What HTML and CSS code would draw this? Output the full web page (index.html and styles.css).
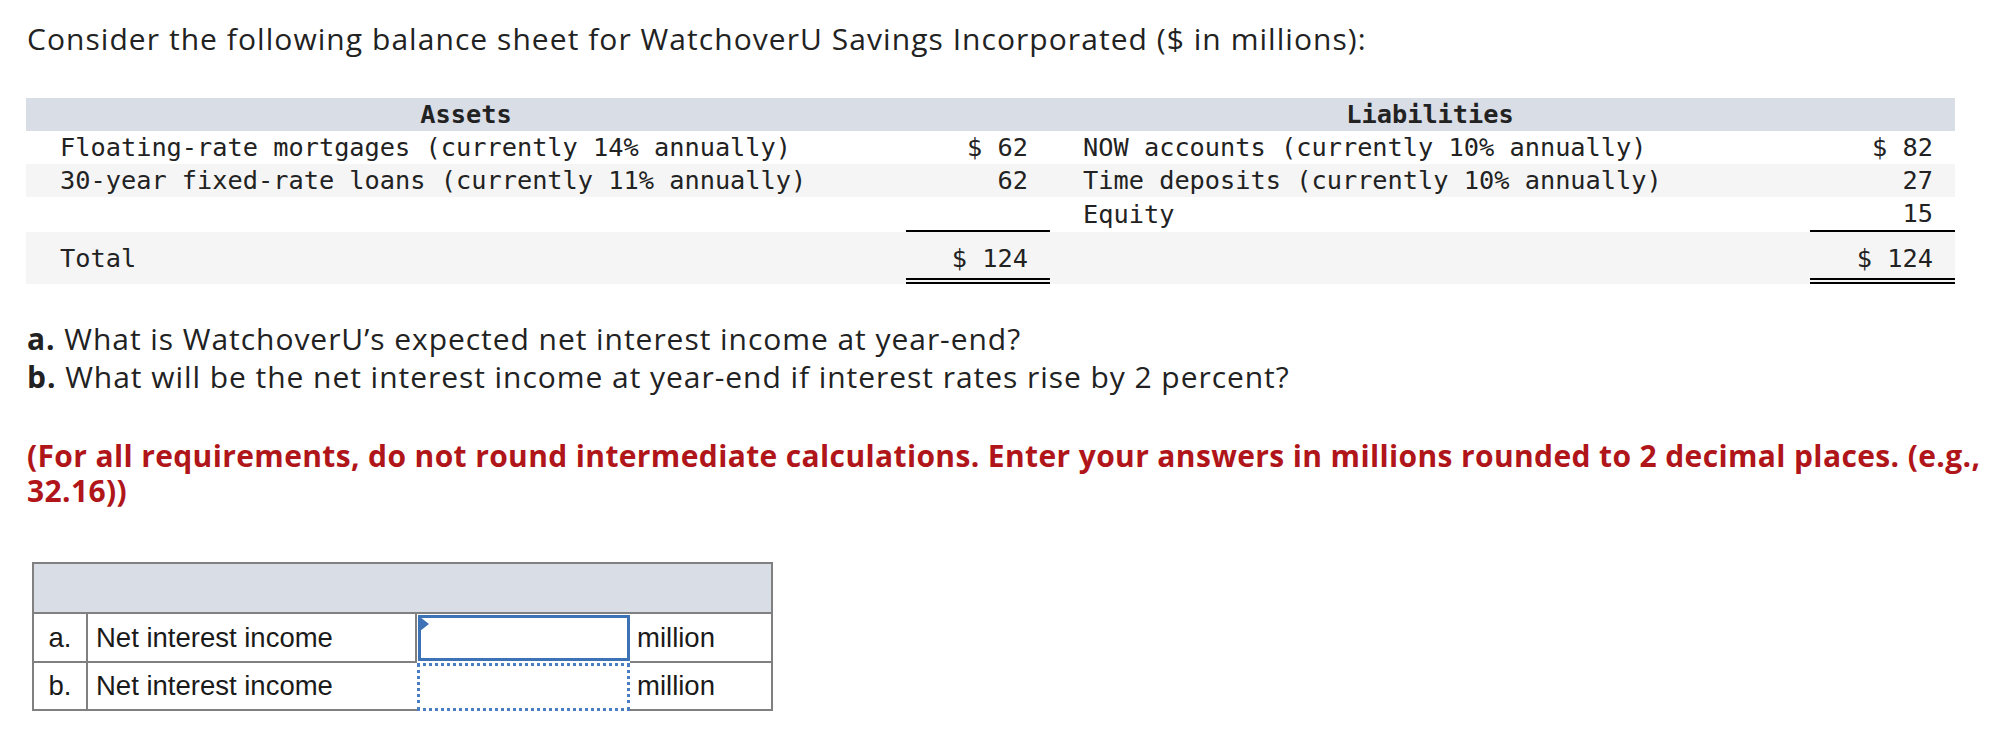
FILE: index.html
```html
<!DOCTYPE html>
<html lang="en">
<head>
<meta charset="utf-8">
<title>WatchoverU Savings balance sheet</title>
<link rel="stylesheet" href="styles.css">
</head>
<body>
<main class="page">
  <p class="title">Consider the following balance sheet for WatchoverU Savings Incorporated ($ in millions):</p>

  <table class="bs">
    <colgroup>
      <col class="col-lab-a">
      <col class="col-amt-a">
      <col class="col-lab-l">
      <col class="col-amt-l">
    </colgroup>
    <thead>
      <tr class="bs-head">
        <th>Assets</th>
        <th></th>
        <th>Liabilities</th>
        <th></th>
      </tr>
    </thead>
    <tbody>
      <tr>
        <td class="lab">Floating-rate mortgages (currently 14% annually)</td>
        <td class="amt">$ 62</td>
        <td class="lab lab-l">NOW accounts (currently 10% annually)</td>
        <td class="amt">$ 82</td>
      </tr>
      <tr class="alt">
        <td class="lab">30-year fixed-rate loans (currently 11% annually)</td>
        <td class="amt">62</td>
        <td class="lab lab-l">Time deposits (currently 10% annually)</td>
        <td class="amt">27</td>
      </tr>
      <tr class="sub">
        <td class="lab"></td>
        <td class="amt"></td>
        <td class="lab lab-l">Equity</td>
        <td class="amt">15</td>
      </tr>
      <tr class="alt total">
        <td class="lab">Total</td>
        <td class="amt">$ 124</td>
        <td class="lab lab-l"></td>
        <td class="amt">$ 124</td>
      </tr>
    </tbody>
  </table>

  <div class="questions">
    <p class="q"><b>a.</b> What is WatchoverU’s expected net interest income at year-end?</p>
    <p class="q"><b>b.</b> What will be the net interest income at year-end if interest rates rise by 2 percent?</p>
  </div>

  <p class="note">(For all requirements, do not round intermediate calculations. Enter your answers in millions rounded to 2 decimal places. (e.g.,<br>32.16))</p>

  <div class="answers">
    <div class="ans-head"></div>

    <div class="cell c-key row-a">a.</div>
    <div class="cell c-desc row-a">Net interest income</div>
    <div class="cell c-input row-a"><div class="box active"><span class="flag"></span></div></div>
    <div class="cell c-unit row-a">million</div>

    <div class="cell c-key row-b">b.</div>
    <div class="cell c-desc row-b">Net interest income</div>
    <div class="cell c-input row-b dotted"></div>
    <div class="cell c-unit row-b">million</div>
  </div>
</main>
</body>
</html>
```

FILE: styles.css
```css
html, body {
  margin: 0;
  padding: 0;
  background: #ffffff;
}

.page {
  padding: 0 0 0 26px;
  color: #222222;
  font-family: "Open Sans", "Lato", sans-serif;
}

.title {
  margin: 21px 0 0 1px;
  font-size: 30px;
  line-height: 35px;
  letter-spacing: 1.05px;
}

/* balance sheet */
.bs {
  margin-top: 42px;
  width: 1929px;
  table-layout: fixed;
  border-collapse: separate;
  border-spacing: 0;
  font-family: "DejaVu Sans Mono", "Liberation Mono", monospace;
  font-size: 25.3px;
  color: #222222;
}

.col-lab-a { width: 880px; }
.col-amt-a { width: 144px; }
.col-lab-l { width: 760px; }
.col-amt-l { width: 145px; }

.bs th,
.bs td {
  padding: 0;
  height: 33px;
  line-height: 33px;
  white-space: pre;
}

.bs-head {
  background: #d9dde6;
}

.bs th {
  font-weight: bold;
  text-align: center;
}

.bs .lab {
  padding-left: 34px;
  text-align: left;
}

.bs .lab-l {
  padding-left: 33px;
}

.bs .amt {
  padding-right: 22px;
  text-align: right;
}

.bs .alt {
  background: #f5f5f5;
}

.bs .sub .amt {
  border-bottom: 2px solid #000000;
}

.bs .total .amt {
  padding-top: 10px;
  padding-bottom: 3px;
  border-bottom: 6px double #000000;
}

/* questions */
.questions {
  margin-top: 36px;
}

.q {
  margin: 0 0 0 1px;
  font-size: 30px;
  line-height: 38px;
  letter-spacing: 0.95px;
}

.note {
  margin: 42px 0 0 1px;
  font-size: 30px;
  line-height: 35px;
  font-weight: bold;
  letter-spacing: 0.37px;
  color: #b0151a;
}

/* answer table */
.answers {
  margin: 54px 0 0 6px;
  width: 741px;
  box-sizing: border-box;
  display: grid;
  grid-template-columns: 54px 329px 213px 141px;
  border: 2px solid #808080;
  border-bottom: none;
  font-family: "Liberation Sans", Arial, sans-serif;
  font-size: 27.5px;
  color: #1a1a1a;
}

.ans-head {
  grid-column: 1 / -1;
  height: 48px;
  background: #d9dde6;
  border-bottom: 2px solid #808080;
}

.cell {
  box-sizing: border-box;
  display: flex;
  align-items: center;
}

.row-a {
  height: 49px;
  border-bottom: 2px solid #808080;
}

.row-b {
  height: 48px;
  border-bottom: 2px solid #808080;
}

.c-key {
  justify-content: center;
  border-right: 2px solid #808080;
}

.c-desc {
  padding-left: 8px;
}

.c-desc.row-a {
  border-right: 2px solid #808080;
}

.c-desc.row-b {
  padding-right: 2px;
}

.c-unit {
  padding-left: 7px;
}

.c-input.row-a {
  border-bottom: none;
  padding: 1px 0 2px 1px;
  align-items: stretch;
}

.box {
  position: relative;
  flex: 1;
  box-sizing: border-box;
  border: 3px solid #3d72b6;
  background: #ffffff;
}

.flag {
  position: absolute;
  left: -1px;
  top: -1px;
  width: 0;
  height: 0;
  border-left: 9px solid #3d72b6;
  border-top: 7px solid transparent;
  border-bottom: 7px solid transparent;
}

.c-input.dotted {
  border: 3px dotted #4a7ec2;
}
```
